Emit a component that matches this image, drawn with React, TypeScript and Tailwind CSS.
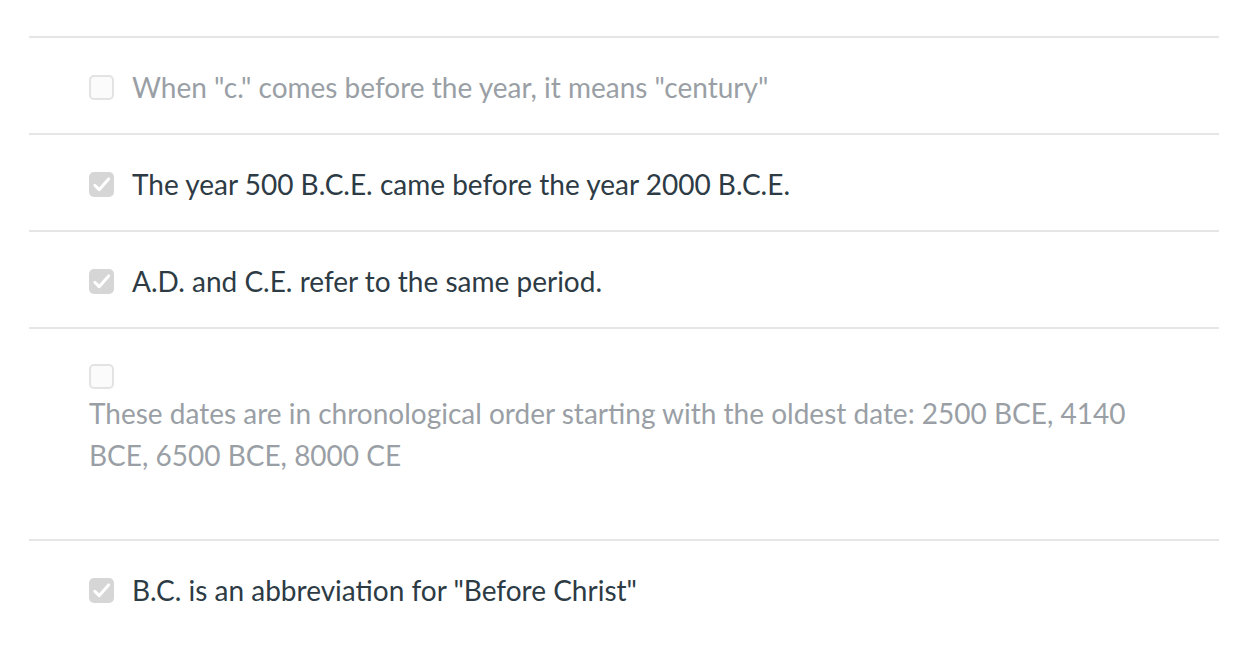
const items = [
  { text: 'When "c." comes before the year, it means "century"', checked: false },
  { text: "The year 500 B.C.E. came before the year 2000 B.C.E.", checked: true },
  { text: "A.D. and C.E. refer to the same period.", checked: true },
  {
    text: "These dates are in chronological order starting with the oldest date: 2500 BCE, 4140 BCE, 6500 BCE, 8000 CE",
    checked: false,
    long: true,
  },
  { text: 'B.C. is an abbreviation for "Before Christ"', checked: true },
];

function Box({ checked }: { checked: boolean }) {
  if (checked) {
    return (
      <span className="flex h-[25px] w-[25px] shrink-0 items-center justify-center rounded-[5px] bg-[#d6d6d6]">
        <svg width="19" height="19" viewBox="0 0 24 24" fill="none" stroke="#fff" strokeWidth="3.8" strokeLinecap="round" strokeLinejoin="round">
          <path d="M3.5 13l5.5 5.5L21 5" />
        </svg>
      </span>
    );
  }
  return <span className="block h-[25px] w-[25px] shrink-0 rounded-[5px] border-2 border-[#e3e3e3] bg-[#fbfbfb]" />;
}

export default function App() {
  return (
    <div className="min-h-[668px] bg-white pl-[29px] pr-[27px] pt-[36px] font-['Lato','Liberation_Sans',sans-serif] text-[28px]">
      {items.map((item, i) =>
        item.long ? (
          <div key={i} className="border-t-2 border-[#e6e6e6] px-[60px] pt-[35px] pb-[63px]">
            <div className="pb-[3px]">
              <Box checked={item.checked} />
            </div>
            <p className="leading-[42px] text-[#9a9fa6]">{item.text}</p>
          </div>
        ) : (
          <div key={i} className="flex items-center gap-[18px] border-t-2 border-[#e6e6e6] pt-[28px] pb-[25px] pl-[60px]">
            <Box checked={item.checked} />
            <span className={`leading-[42px] ${item.checked ? "text-[#2d3b45]" : "text-[#9a9fa6]"}`}>{item.text}</span>
          </div>
        )
      )}
    </div>
  );
}
